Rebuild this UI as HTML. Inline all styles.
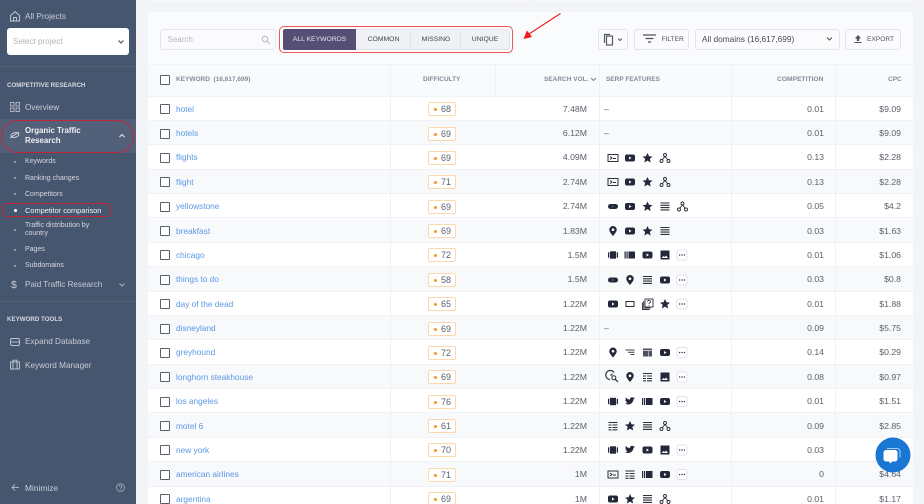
<!DOCTYPE html>
<html style="overflow:hidden;width:924px;height:504px"><head><meta charset="utf-8"><style>
*{box-sizing:border-box}
html,body{margin:0;padding:0}
#wrap{position:absolute;left:0;top:0;width:924px;height:504px;overflow:hidden;background:#f3f4f8}
body{width:924px;height:504px;overflow:hidden;position:relative;background:#f3f4f8;font-family:"Liberation Sans",sans-serif;color:#555b66}
.a{position:absolute;white-space:nowrap}
#side{position:absolute;left:0;top:0;width:136px;height:504px;background:#47566f;color:#c6ccd6;font-size:8.2px}
#side .a{line-height:12px}
.sub{left:25px;font-size:7px;color:#d3d8e0}
.dot{position:absolute;left:13.5px;width:2px;height:2px;border-radius:50%;background:#aab2c0}
.hd{font-size:6.2px;font-weight:bold;color:#d5d9e1}
.btn{position:absolute;top:29px;height:21px;border:1px solid #e2e4ec;border-radius:3px;background:#fbfbfd;font-size:6.6px;color:#4c525e;line-height:19px}
.tab{position:absolute;top:29px;height:21px;line-height:21px;font-size:6.8px;text-align:center;color:#3f4450}
.th{position:absolute;top:65px;line-height:30px;font-size:6.5px;font-weight:bold;color:#858b99;white-space:nowrap}
.r{position:absolute;left:148px;width:765px;height:24.4px;border-bottom:1px solid #f1f2f6;background:#fff;font-size:8.7px;line-height:25px;color:#5a5f69}
.r.o{background:#f8f9fb}
.r span,.r i,.r b{position:absolute;white-space:nowrap}
.c{left:12px;top:7.5px;width:10px;height:10px;border:1.4px solid #5b606c;border-radius:1px;background:#fff}
.k{left:28px;color:#5b98e6;font-size:8.3px}
.b{left:280px;top:5.5px;width:28px;height:14px;border:1px solid #fcd9ad;border-radius:2px;background:#fff;line-height:13px;font-size:9px;font-weight:normal;padding-left:12px;color:#5a5f69}
.b::before{content:"";position:absolute;left:5px;top:5px;width:3px;height:3px;border-radius:50%;background:#f8981d}
.v{right:326px}
.dash{left:456px}
.m{right:89px}
.p{right:12px}
.l{position:absolute;top:65px;width:1px;height:439px;background:#f0f1f5}
</style></head><body><div id="wrap">

<div class="a" style="left:148px;top:-8px;width:380px;height:10px;background:#f7f8fa;border-radius:3px"></div>
<div class="a" style="left:536px;top:-8px;width:380px;height:10px;background:#f7f8fa;border-radius:3px"></div>
<div class="a" style="left:148px;top:12px;width:765px;height:492px;background:#fafbfd;border-radius:3px 3px 0 0"></div>

<div class="a" style="left:148px;top:64px;width:765px;height:33px;background:#f9fafc;border-top:1px solid #f1f2f6;border-bottom:1px solid #f1f2f6"></div>

<div class="a" style="left:160px;top:29px;width:116px;height:21px;border:1px solid #e3e5ec;border-radius:3px;background:#fbfbfd;font-size:8px;line-height:19px;padding-left:6.5px;color:#b3b6bf">Search</div>
<svg class="a" style="left:261px;top:35px" width="10" height="10" viewBox="0 0 10 10" fill="none" stroke="#b9bcc5" stroke-width="1.1"><circle cx="4" cy="4" r="2.8"/><path d="M6 6l3 3"/></svg>

<div class="a" style="left:279px;top:26px;width:234px;height:27px;border:1px solid #f35454;border-radius:5px"></div>
<div class="a" style="left:283px;top:29px;width:227px;height:21px;background:#f0f1f5;border:1px solid #e1e3ea;border-radius:3px"></div>
<div class="tab" style="left:283px;width:73px;background:#574e75;color:#e6e4ee;border-radius:2px 0 0 2px">ALL KEYWORDS</div>
<div class="tab" style="left:356px;width:55px">COMMON</div>
<div class="tab" style="left:411px;width:50px">MISSING</div>
<div class="tab" style="left:461px;width:48px">UNIQUE</div>
<div class="a" style="left:410px;top:32px;width:1px;height:15px;background:#dfe1e8"></div>
<div class="a" style="left:460px;top:32px;width:1px;height:15px;background:#dfe1e8"></div>

<svg class="a" style="left:515px;top:8px" width="50" height="36" viewBox="0 0 50 36"><path d="M45.5 5.5L14 26" stroke="#f01c1c" stroke-width="1.1"/><path d="M8.5 31l3.500-8.500 5 6.500z" fill="#f01c1c"/></svg>

<div class="btn" style="left:598px;width:30px"></div>
<svg class="a" style="left:603px;top:33px" width="22" height="14" viewBox="0 0 22 14" fill="none" stroke="#565c68" stroke-width="1.2"><rect x="3.5" y="3" width="6" height="9" fill="#fbfbfd"/><path d="M1.5 10V1.500H7"/><path d="M15 5.500l2 2 2-2" stroke-width="1"/></svg>
<div class="btn" style="left:634px;width:55px;padding-left:26.500px">FILTER</div>
<svg class="a" style="left:642px;top:33px" width="16" height="12" viewBox="0 0 16 12" stroke="#4c525e" stroke-width="1.2"><path d="M1 2h13M3.500 5.500h8M6 9h3"/></svg>
<div class="btn" style="left:695px;width:145px;padding-left:6px;font-size:8.3px;color:#444a55">All domains (16,617,699)</div>
<svg class="a" style="left:825px;top:36px" width="9" height="6" viewBox="0 0 9 6" fill="none" stroke="#555" stroke-width="1.1"><path d="M2 1.500l2.500 2.500 2.500-2.500"/></svg>
<div class="btn" style="left:845px;width:56px;padding-left:21px">EXPORT</div>
<svg class="a" style="left:853px;top:34px" width="10" height="10" viewBox="0 0 10 10" fill="#4c525e"><path d="M5 1L8 4.500H6.200V7H3.800V4.500H2zM1.500 8h7v1h-7z"/></svg>

<div class="a" style="left:160px;top:75px;width:10px;height:10px;border:1.4px solid #5b606c;border-radius:1px;background:#fff"></div>
<div class="th" style="left:176px">KEYWORD &nbsp;(16,617,699)</div>
<div class="th" style="left:423px">DIFFICULTY</div>
<div class="th" style="left:544px">SEARCH VOL.</div>
<svg class="a" style="left:590px;top:77px" width="7" height="5" viewBox="0 0 7 5" fill="none" stroke="#7b8292"><path d="M1 1l2.500 2.500L6 1"/></svg>
<div class="th" style="left:606px">SERP FEATURES</div>
<div class="th" style="left:777px;font-size:6.7px">COMPETITION</div>
<div class="th" style="left:888px">CPC</div>

<div class="r" style="top:96.6px"><i class="c"></i><span class="k">hotel</span><b class="b">68</b><span class="v">7.48M</span><span class="dash">–</span><span class="m">0.01</span><span class="p">$9.09</span></div>
<div class="r o" style="top:121px"><i class="c"></i><span class="k">hotels</span><b class="b">69</b><span class="v">6.12M</span><span class="dash">–</span><span class="m">0.01</span><span class="p">$9.09</span></div>
<div class="r" style="top:145.4px"><i class="c"></i><span class="k">flights</span><b class="b">69</b><span class="v">4.09M</span><span class="m">0.13</span><span class="p">$2.28</span></div>
<div class="r o" style="top:169.7px"><i class="c"></i><span class="k">flight</span><b class="b">71</b><span class="v">2.74M</span><span class="m">0.13</span><span class="p">$2.28</span></div>
<div class="r" style="top:194.1px"><i class="c"></i><span class="k">yellowstone</span><b class="b">69</b><span class="v">2.74M</span><span class="m">0.05</span><span class="p">$4.2</span></div>
<div class="r o" style="top:218.5px"><i class="c"></i><span class="k">breakfast</span><b class="b">69</b><span class="v">1.83M</span><span class="m">0.03</span><span class="p">$1.63</span></div>
<div class="r" style="top:242.9px"><i class="c"></i><span class="k">chicago</span><b class="b">72</b><span class="v">1.5M</span><span class="m">0.01</span><span class="p">$1.06</span></div>
<div class="r o" style="top:267.2px"><i class="c"></i><span class="k">things to do</span><b class="b">58</b><span class="v">1.5M</span><span class="m">0.03</span><span class="p">$0.8</span></div>
<div class="r" style="top:291.6px"><i class="c"></i><span class="k">day of the dead</span><b class="b">65</b><span class="v">1.22M</span><span class="m">0.01</span><span class="p">$1.88</span></div>
<div class="r o" style="top:316px"><i class="c"></i><span class="k">disneyland</span><b class="b">69</b><span class="v">1.22M</span><span class="dash">–</span><span class="m">0.09</span><span class="p">$5.75</span></div>
<div class="r" style="top:340.4px"><i class="c"></i><span class="k">greyhound</span><b class="b">72</b><span class="v">1.22M</span><span class="m">0.14</span><span class="p">$0.29</span></div>
<div class="r o" style="top:364.7px"><i class="c"></i><span class="k">longhorn steakhouse</span><b class="b">69</b><span class="v">1.22M</span><span class="m">0.08</span><span class="p">$0.97</span></div>
<div class="r" style="top:389.1px"><i class="c"></i><span class="k">los angeles</span><b class="b">76</b><span class="v">1.22M</span><span class="m">0.01</span><span class="p">$1.51</span></div>
<div class="r o" style="top:413.5px"><i class="c"></i><span class="k">motel 6</span><b class="b">61</b><span class="v">1.22M</span><span class="m">0.09</span><span class="p">$2.85</span></div>
<div class="r" style="top:437.9px"><i class="c"></i><span class="k">new york</span><b class="b">70</b><span class="v">1.22M</span><span class="m">0.03</span></div>
<div class="r o" style="top:462.2px"><i class="c"></i><span class="k">american airlines</span><b class="b">71</b><span class="v">1M</span><span class="m">0</span><span class="p">$4.64</span></div>
<div class="r" style="top:486.6px"><i class="c"></i><span class="k">argentina</span><b class="b">69</b><span class="v">1M</span><span class="m">0.01</span><span class="p">$1.17</span></div>

<div class="l" style="left:390px"></div>
<div class="l" style="left:495px;height:32px"></div>
<div class="l" style="left:599px"></div>
<div class="l" style="left:731px"></div>
<div class="l" style="left:835px"></div>

<svg class="a" style="left:0;top:0" width="924" height="504" viewBox="0 0 924 504">
<defs>
<g id="term"><rect x="-5" y="-3.5" width="10" height="7" fill="none" stroke="#2a2f3b" stroke-width="1"/><path d="M-3-1.500l2 1.500-2 1.500M0 .5h3" fill="none" stroke="#2a2f3b" stroke-width="1"/></g>
<g id="yt"><rect x="-5" y="-3.5" width="10" height="7" rx="2" fill="#23283a"/><path d="M-1-1.500L1.500 0-1 1.500z" fill="#fff"/></g>
<path id="star" d="M0-5L1.500-1.700 5-1.400 2.300.9 3.200 4.500 0 2.600-3.200 4.500-2.300.9-5-1.400-1.500-1.700z" fill="#23283a"/>
<g id="tree" fill="none" stroke="#2a2f3b" stroke-width=".9"><circle cx="0" cy="-3" r="1.500"/><circle cx="-3.500" cy="3" r="1.500"/><circle cx="3.500" cy="3" r="1.500"/><path d="M0-1.500L-2.700 1.700M0-1.500L2.700 1.700"/></g>
<g id="pill"><rect x="-5" y="-2.5" width="10" height="5" rx="2.500" fill="#23283a"/><path d="M-1 .5l1-1" stroke="#aab" stroke-width=".6"/></g>
<g id="list" stroke="#2a2f3b" stroke-width="1.1"><path d="M-4.500-3.500h9M-4.500-1.200h9M-4.500 1.100h9M-4.500 3.400h9"/></g>
<g id="pin"><path d="M0 5C-2.500 2-3.700.2-3.700-1.300A3.700 3.700 0 0 1 3.700-1.300C3.700.2 2.500 2 0 5z" fill="#23283a"/><circle cx="0" cy="-1.3" r="1.300" fill="#fff"/></g>
<g id="car" fill="#23283a"><rect x="-3" y="-3.7" width="6" height="7.4"/><rect x="-5" y="-2.7" width="1.300" height="5.4"/><rect x="3.7" y="-2.7" width="1.300" height="5.4"/></g>
<g id="film" fill="#23283a"><rect x="-5.5" y="-3.5" width="1.200" height="7"/><rect x="-3.5" y="-3.5" width="1.200" height="7"/><rect x="-1.5" y="-3.5" width="6.500" height="7"/></g>
<g id="img"><rect x="-4.5" y="-4.5" width="9" height="9" rx=".5" fill="#23283a"/><path d="M-3.500 3l2-2 1.200 1 1.300-1.500 2 2.500z" fill="#fff"/></g>
<g id="more"><rect x="-5" y="-5" width="10" height="10" rx="2" fill="#fff" stroke="#e1e3ec"/><rect x="-3" y="-.6" width="1.200" height="1.200" fill="#23283a"/><rect x="-.6" y="-.6" width="1.200" height="1.200" fill="#23283a"/><rect x="1.8" y="-.6" width="1.200" height="1.200" fill="#23283a"/></g>
<rect id="rect" x="-4" y="-2.5" width="8" height="5" fill="none" stroke="#2a2f3b" stroke-width="1"/>
<g id="q" fill="none" stroke="#2a2f3b" stroke-width=".9"><rect x="-2.5" y="-5" width="8" height="8" fill="#fff"/><path d="M-3.800-3v7h7M-5-1.500V5.500h7"/><path d="M.1-2.300a1.400 1.400 0 1 1 2.100 1.200L1.500-.5V.3M1.500 1v.8" stroke-width=".8"/></g>
<g id="ind" stroke="#3c4150" stroke-width="1"><path d="M-4.500-2.500h9M-2-.3h6.500M.5 2h4"/></g>
<g id="tbl" fill="#4d5261"><rect x="-4.5" y="-4" width="9" height="1.800"/><rect x="-4.5" y="-1.5" width="5.500" height="5.500"/><rect x="1.5" y="-1.5" width="3" height="5.500"/></g>
<g id="tl" stroke="#2a2f3b" stroke-width="1.1"><path d="M-4.500-3.500h9M-4.500-1h3M-.5-1h5M-4.500 1.500h3M-.5 1.500h5M-4.500 3.800h3M-.5 3.800h5"/></g>
<g id="tw"><path d="M5-3.300c-.5.200-.8.300-1.200.3.400-.3.700-.6.900-1.100-.4.200-.8.400-1.300.5A2 2 0 0 0 0-1.900C-1.700-2-3.200-2.800-4.200-4-4.800-3-4.500-2-3.800-1.400L-4.700-1.600C-4.700-.7-4-.1-3.100.1L-4 .1C-3.800.8-3.100 1.300-2.300 1.300-3 1.900-4 2.200-5 2 -4 2.700-3 3-2 3 1.500 3 3.500 0 3.500-2.400 4.100-2.300 4.600-2.800 5-3.300z" fill="#23283a"/></g>
<g id="srch" fill="none" stroke="#2a2f3b" stroke-width="1.2"><path d="M1-4.500A4.500 4.500 0 1 0-3 2.500"/><circle cx=".8" cy=".8" r="2" stroke-width="1"/><path d="M2.300 2.300L5 5"/><path d="M-2.500-1.500l2-1.500"/></g>
</defs>
<g>
<use href="#term" x="613" y="158"/><use href="#yt" x="630" y="158"/><use href="#star" x="647.5" y="158"/><use href="#tree" x="665" y="158"/>
<use href="#term" x="613" y="182"/><use href="#yt" x="630" y="182"/><use href="#star" x="647.5" y="182"/><use href="#tree" x="665" y="182"/>
<use href="#pill" x="613" y="206.5"/><use href="#yt" x="630" y="206.5"/><use href="#star" x="647.5" y="206.5"/><use href="#list" x="665" y="206.5"/><use href="#tree" x="682.5" y="206.5"/>
<use href="#pin" x="613" y="231"/><use href="#yt" x="630" y="231"/><use href="#star" x="647.5" y="231"/><use href="#list" x="665" y="231"/>
<use href="#car" x="613" y="255"/><use href="#film" x="630" y="255"/><use href="#yt" x="647.5" y="255"/><use href="#img" x="665" y="255"/><use href="#more" x="682" y="255"/>
<use href="#pill" x="613" y="280"/><use href="#pin" x="630" y="280"/><use href="#list" x="647.5" y="280"/><use href="#yt" x="665" y="280"/><use href="#more" x="682" y="280"/>
<use href="#yt" x="613" y="304"/><use href="#rect" x="630" y="304"/><use href="#q" x="647.5" y="304"/><use href="#star" x="665" y="304"/><use href="#more" x="682" y="304"/>
<use href="#pin" x="613" y="352.5"/><use href="#ind" x="630" y="352.5"/><use href="#tbl" x="647.5" y="352.5"/><use href="#yt" x="665" y="352.5"/><use href="#more" x="682" y="352.5"/>
<use href="#srch" x="613" y="377"/><use href="#pin" x="630" y="377"/><use href="#tl" x="647.5" y="377"/><use href="#img" x="665" y="377"/><use href="#more" x="682" y="377"/>
<use href="#car" x="613" y="401.5"/><use href="#tw" x="630" y="401.5"/><use href="#film" x="647.5" y="401.5"/><use href="#yt" x="665" y="401.5"/><use href="#more" x="682" y="401.5"/>
<use href="#tl" x="613" y="426"/><use href="#star" x="630" y="426"/><use href="#list" x="647.5" y="426"/><use href="#tree" x="665" y="426"/>
<use href="#car" x="613" y="450"/><use href="#tw" x="630" y="450"/><use href="#yt" x="647.5" y="450"/><use href="#img" x="665" y="450"/><use href="#more" x="682" y="450"/>
<use href="#term" x="613" y="474.5"/><use href="#tl" x="630" y="474.5"/><use href="#film" x="647.5" y="474.5"/><use href="#yt" x="665" y="474.5"/><use href="#more" x="682" y="474.5"/>
<use href="#yt" x="613" y="499"/><use href="#star" x="630" y="499"/><use href="#list" x="647.5" y="499"/><use href="#tree" x="665" y="499"/>
</g>
<circle cx="893" cy="455" r="17.5" fill="#1976d2"/>
<path d="M887 448.5h10a3 3 0 0 1 3 3v6" fill="none" stroke="#a9cdf0" stroke-width="1"/>
<path d="M886 450h9a2.500 2.500 0 0 1 2.500 2.500v6.500a2.500 2.500 0 0 1-2.500 2.500h-3l-1.500 2-1.500-2h-3a2.500 2.500 0 0 1-2.500-2.500v-6.500a2.500 2.500 0 0 1 2.500-2.500z" fill="#fff"/>
</svg>

<div id="side">
<div class="a" style="left:0;top:66px;width:136px;height:1px;background:#566479"></div>
<div class="a" style="left:0;top:301px;width:136px;height:1px;background:#566479"></div>
<div class="a" style="left:0;top:119px;width:136px;height:34px;background:#526179"></div>
<svg class="a" style="left:9px;top:10px" width="12" height="12" viewBox="0 0 12 12" fill="none" stroke="#c6ccd6" stroke-width=".9"><path d="M1.500 5.500L6 1.500l4.500 4V11h-9zM4.500 11V7.500h3V11"/></svg>
<div class="a" style="left:25px;top:10.5px">All Projects</div>
<div class="a" style="left:7px;top:28px;width:122px;height:27px;background:#fff;border-radius:3px;color:#b0b3ba;font-size:8.2px;line-height:27px;padding-left:6px">Select project</div>
<svg class="a" style="left:117px;top:39px" width="8" height="6" viewBox="0 0 8 6" fill="none" stroke="#555" stroke-width="1.2"><path d="M1.500 1.500L4 4l2.500-2.500"/></svg>
<div class="a hd" style="left:7px;top:79.5px">COMPETITIVE RESEARCH</div>
<svg class="a" style="left:10px;top:102px" width="10" height="10" viewBox="0 0 10 10" fill="none" stroke="#b6bdc9" stroke-width=".9"><rect x=".5" y=".5" width="3.500" height="3.500"/><rect x="6" y=".5" width="3.500" height="3.500"/><rect x=".5" y="6" width="3.500" height="3.500"/><rect x="6" y="6" width="3.500" height="3.500"/></svg>
<div class="a" style="left:25px;top:102px">Overview</div>
<svg class="a" style="left:9px;top:130px" width="12" height="10" viewBox="0 0 12 10" fill="none" stroke="#d5d9e1" stroke-width=".9"><ellipse cx="6" cy="5" rx="4" ry="2.300" transform="rotate(-15 6 5)"/><path d="M1 8l9-6"/></svg>
<div class="a" style="left:25px;top:125.5px;color:#eef0f4;font-weight:bold;font-size:7.9px;line-height:10.5px">Organic Traffic<br>Research</div>
<svg class="a" style="left:118px;top:133px" width="8" height="6" viewBox="0 0 8 6" fill="none" stroke="#e4e7ed" stroke-width="1.1"><path d="M1.500 4L4 1.500 6.500 4"/></svg>
<div class="a" style="left:1px;top:120px;width:133px;height:33px;border:1px solid #c0263a;border-radius:17px"></div>

<i class="dot" style="top:160.5px"></i><div class="a sub" style="top:156px">Keywords</div>
<i class="dot" style="top:177px"></i><div class="a sub" style="top:172.5px">Ranking changes</div>
<i class="dot" style="top:193px"></i><div class="a sub" style="top:188.5px">Competitors</div>
<i class="dot" style="top:209px;background:#fff;width:3px;height:3px"></i><div class="a sub" style="top:204.5px;color:#f4f6f8;font-size:7.4px">Competitor comparison</div>
<div class="a" style="left:2px;top:203px;width:109px;height:14px;border:1px solid #c0263a;border-radius:5px"></div>
<i class="dot" style="top:229px"></i><div class="a sub" style="top:222px;line-height:8px">Traffic distribution by<br>country</div>
<i class="dot" style="top:249px"></i><div class="a sub" style="top:244px">Pages</div>
<i class="dot" style="top:265px"></i><div class="a sub" style="top:260px">Subdomains</div>
<div class="a" style="left:11px;top:279px;font-size:10.5px;color:#c6ccd6">$</div>
<div class="a" style="left:25px;top:279px;font-size:8.1px">Paid Traffic Research</div>
<svg class="a" style="left:118px;top:282px" width="8" height="6" viewBox="0 0 8 6" fill="none" stroke="#aab2c0" stroke-width="1"><path d="M1.500 1.500L4 4l2.500-2.500"/></svg>
<div class="a hd" style="left:7px;top:314px">KEYWORD TOOLS</div>
<svg class="a" style="left:10px;top:337px" width="10" height="10" viewBox="0 0 10 10" fill="none" stroke="#c0c6d1" stroke-width=".9"><rect x=".5" y="1.500" width="9" height="7" rx="1.500"/><path d="M.5 5h9"/></svg>
<div class="a" style="left:25px;top:336px">Expand Database</div>
<svg class="a" style="left:9px;top:359px" width="12" height="11" viewBox="0 0 12 11" fill="none" stroke="#c6ccd6" stroke-width=".9"><rect x="1.500" y="3" width="9" height="7"/><path d="M4 3V1.200h4V3M4 3v7M8 3v7"/></svg>
<div class="a" style="left:25px;top:359.5px">Keyword Manager</div>
<svg class="a" style="left:10px;top:483px" width="10" height="9" viewBox="0 0 10 9" fill="none" stroke="#aab2c0" stroke-width="1"><path d="M9 4.500H2M5 1.500l-3 3 3 3"/></svg>
<div class="a" style="left:25px;top:481.5px;font-size:8.4px">Minimize</div>
<svg class="a" style="left:115.5px;top:482.5px" width="9" height="9" viewBox="0 0 9 9" fill="none" stroke="#aab2c0" stroke-width=".8"><circle cx="4.500" cy="4.500" r="3.900"/><path d="M3.200 3.500a1.300 1.300 0 1 1 1.800 1.200L4.500 5.500M4.500 6.200v.8"/></svg>
</div>
</div></body></html>
